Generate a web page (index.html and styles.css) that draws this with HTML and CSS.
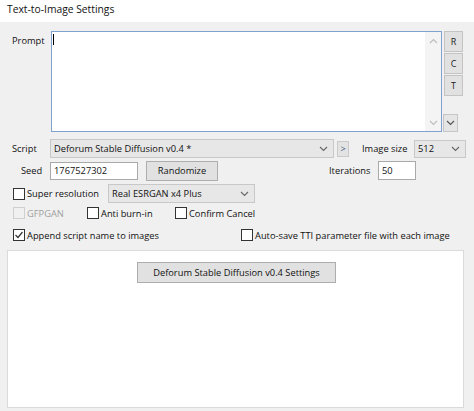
FILE: index.html
```html
<!DOCTYPE html>
<html>
<head>
<meta charset="utf-8">
<link rel="stylesheet" href="styles.css">
</head>
<body>
<div class="title">Text-to-Image Settings</div>
<div class="panel">
  <div class="row prompt-row">
    <div class="lbl lbl-prompt">Prompt</div>
    <div class="textarea">
      <div class="text"><span class="caret"></span></div>
      <div class="vscroll">
        <svg width="9" height="6" viewBox="0 0 9 6"><polyline points="1,5 4.5,1.5 8,5" fill="none" stroke="#bdbdbd" stroke-width="1.2"/></svg>
        <svg width="9" height="6" viewBox="0 0 9 6"><polyline points="1,1 4.5,4.5 8,1" fill="none" stroke="#bdbdbd" stroke-width="1.2"/></svg>
      </div>
    </div>
    <div class="side">
      <div class="sbtn">R</div>
      <div class="sbtn">C</div>
      <div class="sbtn">T</div>
      <div class="expand"><svg width="9" height="6" viewBox="0 0 9 6"><polyline points="1,1 4.5,4.5 8,1" fill="none" stroke="#555" stroke-width="1.2"/></svg></div>
    </div>
  </div>

  <div class="row script-row">
    <div class="lbl">Script</div>
    <div class="combo combo-script"><span class="ctext">Deforum Stable Diffusion v0.4 *</span><svg class="chev" width="9" height="6" viewBox="0 0 9 6"><polyline points="1,1 4.5,4.5 8,1" fill="none" stroke="#666" stroke-width="1.1"/></svg></div>
    <div class="gt">&gt;</div>
    <div class="lbl-size">Image size</div>
    <div class="combo combo-size"><span class="ctext">512</span><svg class="chev" width="9" height="6" viewBox="0 0 9 6"><polyline points="1,1 4.5,4.5 8,1" fill="none" stroke="#666" stroke-width="1.1"/></svg></div>
  </div>

  <div class="row seed-row">
    <div class="lbl lbl-seed">Seed</div>
    <div class="input input-seed">1767527302</div>
    <div class="btn btn-rand">Randomize</div>
    <div class="lbl-iter">Iterations</div>
    <div class="input input-iter">50</div>
  </div>

  <div class="row chk-row super-row">
    <span class="chk"></span><span class="sr-label">Super resolution</span>
    <div class="combo combo-sr"><span class="ctext">Real ESRGAN x4 Plus</span><svg class="chev" width="9" height="6" viewBox="0 0 9 6"><polyline points="1,1 4.5,4.5 8,1" fill="none" stroke="#666" stroke-width="1.1"/></svg></div>
  </div>

  <div class="row chk-row opt-row">
    <div class="item item-gfp"><span class="chk disabled"></span><span class="dis-text">GFPGAN</span></div>
    <div class="item item-anti"><span class="chk"></span><span>Anti burn-in</span></div>
    <div class="item"><span class="chk"></span><span>Confirm Cancel</span></div>
  </div>

  <div class="row chk-row append-row">
    <div class="item item-append"><span class="chk checked"><svg width="10" height="10" viewBox="0 0 10 10"><polyline points="1.5,5 4,7.5 8.5,2" fill="none" stroke="#333" stroke-width="1.2"/></svg></span><span>Append script name to images</span></div>
    <div class="item"><span class="chk"></span><span>Auto-save TTI parameter file with each image</span></div>
  </div>

  <div class="box">
    <div class="btn btn-settings">Deforum Stable Diffusion v0.4 Settings</div>
  </div>
</div>
</body>
</html>
```

FILE: styles.css
```css
* { box-sizing: border-box; }

body {
  margin: 0;
  width: 474px;
  height: 411px;
  overflow: hidden;
  background: #f0f0f0;
  font-family: "Open Sans", "Noto Sans", sans-serif;
  font-size: 9.3px;
  color: #111;
}

.title {
  height: 22px;
  background: #fff;
  padding: 2px 0 0 7px;
  font-size: 10.3px;
  line-height: 15px;
  color: #111;
}

.panel {
  padding-top: 9px;
}

.row {
  display: flex;
  align-items: center;
}

.lbl {
  width: 50px;
  padding-left: 12px;
  flex: none;
}

/* Prompt */
.prompt-row {
  align-items: stretch;
  height: 101px;
}

.lbl-prompt {
  width: 51px;
  padding-top: 3px;
}

.textarea {
  width: 391px;
  height: 101px;
  border: 1px solid #7fa3d1;
  background: #fff;
  display: flex;
}

.text {
  flex: 1;
  padding: 2px 1px;
}

.caret {
  display: block;
  width: 1px;
  height: 11px;
  background: #000;
}

.vscroll {
  width: 16px;
  background: #f4f4f4;
  display: flex;
  flex-direction: column;
  justify-content: space-between;
  align-items: center;
  padding: 6px 0 5px;
}

.side {
  margin-left: 2px;
  width: 19px;
  display: flex;
  flex-direction: column;
  gap: 1px;
}

.sbtn {
  height: 21px;
  background: #e1e1e1;
  border: 1px solid #c4c4c4;
  display: flex;
  align-items: center;
  justify-content: center;
  color: #222;
  font-size: 9px;
}

.expand {
  margin-top: auto;
  margin-left: -1px;
  width: 15px;
  height: 18px;
  background: #e5e5e5;
  border: 1px solid #c6c6c6;
  display: flex;
  align-items: center;
  justify-content: center;
}

/* Script row */
.script-row {
  margin-top: 7px;
  height: 19px;
}

.combo {
  height: 19px;
  border: 1px solid #c8c8c8;
  background: #e7e7e7;
  display: flex;
  align-items: center;
  padding-left: 3px;
  flex: none;
}

.ctext {
  flex: 1;
  white-space: nowrap;
}

.chev {
  margin-right: 5px;
}

.combo-script {
  width: 284px;
}

.gt {
  margin-left: 3px;
  width: 12px;
  height: 16px;
  background: #e3e3e3;
  border: 1px solid #cacaca;
  display: flex;
  align-items: center;
  justify-content: center;
  color: #3d5a80;
  font-size: 9px;
}

.lbl-size {
  margin-left: 13px;
  width: 52px;
  white-space: nowrap;
}

.combo-size {
  width: 52px;
  height: 18px;
}

/* Seed row */
.seed-row {
  margin-top: 3px;
  height: 19px;
}

.lbl-seed {
  padding-left: 21px;
}

.input {
  height: 18px;
  background: #fff;
  border: 1px solid #a9a9a9;
  padding-left: 3px;
  display: flex;
  align-items: center;
}

.input-seed {
  width: 88px;
}

.btn {
  background: #e1e1e1;
  border: 1px solid #adadad;
  display: flex;
  align-items: center;
  justify-content: center;
  white-space: nowrap;
}

.btn-rand {
  margin-left: 8px;
  width: 72px;
  height: 20px;
}

.lbl-iter {
  margin-left: 111px;
  width: 49px;
}

.input-iter {
  width: 38px;
  height: 19px;
}

/* Checkbox rows */
.chk-row {
  padding-left: 13px;
}

.chk {
  width: 12px;
  height: 12px;
  border: 1px solid #333;
  background: #fff;
  margin-right: 2px;
  flex: none;
  display: flex;
  align-items: center;
  justify-content: center;
}

.chk.disabled {
  border-color: #cfcfcf;
  background: #f0f0f0;
}

.dis-text {
  color: #a0a0a0;
}

.item {
  display: flex;
  align-items: center;
  white-space: nowrap;
  flex: none;
}

.super-row {
  margin-top: 4px;
  height: 19px;
}

.sr-label {
  width: 81px;
  white-space: nowrap;
}

.combo-sr {
  width: 147px;
}

.opt-row {
  margin-top: 2px;
  height: 16px;
}

.item-gfp {
  width: 74px;
}

.item-anti {
  width: 88px;
}

.append-row {
  margin-top: 6px;
  height: 16px;
}

.item-append {
  width: 228px;
}

/* Bottom box */
.box {
  margin: 7px 0 0 7px;
  width: 457px;
  height: 158px;
  background: #fff;
  border: 1px solid #dadada;
  padding-top: 11px;
}

.btn-settings {
  margin-left: 129px;
  width: 199px;
  height: 21px;
}
```
